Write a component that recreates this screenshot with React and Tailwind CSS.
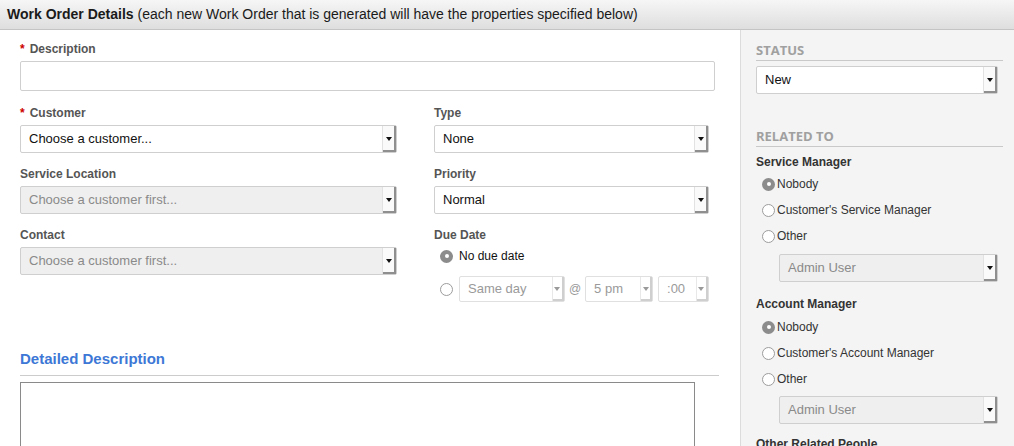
const font = { fontFamily: '"Liberation Sans", Arial, sans-serif' };

const Arrow = () => (
  <div className="flex h-full w-[14px] shrink-0 items-center justify-center border-l border-[#e2e2e2] bg-[#fafafa] shadow-[inset_-2px_-2px_0_#8f8f8f]">
    <svg width="6" height="4" viewBox="0 0 6 4" className="-ml-[2px] -mt-[1px]">
      <path d="M0 0h6L3 4z" fill="#111" />
    </svg>
  </div>
);

const Select = ({ value, disabled, className = '' }) => (
  <div
    className={`flex h-[28px] items-center rounded-[2px] border border-[#cfcfcf] ${
      disabled ? 'bg-[#efefef] text-[#8a8a8a]' : 'bg-white text-[#111]'
    } ${className}`}
  >
    <span className="flex-1 truncate pl-[8px] text-[13px]">{value}</span>
    <Arrow />
  </div>
);

const SmallSelect = ({ value, className = '' }) => (
  <div className={`flex h-[26px] items-center rounded-[2px] border border-[#e0e0e0] bg-white text-[#9a9a9a] ${className}`}>
    <span className="flex-1 truncate pl-[8px] text-[13px]">{value}</span>
    <div className="flex h-full w-[12px] items-center justify-center border-l border-[#e8e8e8] shadow-[inset_-2px_-2px_0_#cfcfcf]">
      <svg width="6" height="4" viewBox="0 0 6 4" className="-ml-[2px]">
        <path d="M0 0h6L3 4z" fill="#9a9a9a" />
      </svg>
    </div>
  </div>
);

const Radio = ({ checked }) =>
  checked ? (
    <span className="flex h-[13px] w-[13px] shrink-0 items-center justify-center rounded-full bg-[#8c8c8c]">
      <span className="h-[4px] w-[4px] rounded-full bg-white" />
    </span>
  ) : (
    <span className="h-[13px] w-[13px] shrink-0 rounded-full border border-[#9c9c9c] bg-white" />
  );

const Label = ({ children, required }) => (
  <div className="mb-[4px] flex h-[16px] items-center text-[12px] font-bold text-[#555]">
    {required && <span className="mr-[5px] text-[#c00]">*</span>}
    {children}
  </div>
);

const SideHeading = ({ children }) => (
  <div
    className="border-b border-[#c9c9c9] pb-[2px] text-[13px] font-bold uppercase leading-[16px] text-[#a0a0a0]"
    style={{ fontFamily: '"Open Sans", sans-serif' }}
  >
    {children}
  </div>
);

const RadioRow = ({ checked, children }) => (
  <div className="flex h-[26px] items-center gap-[2px] pl-[6px] text-[12px] text-[#333]">
    <Radio checked={checked} />
    <span>{children}</span>
  </div>
);

export default function App() {
  return (
    <div className="h-[446px] w-[1014px] overflow-hidden bg-white" style={font}>
      <div className="flex h-[30px] items-center border-b border-[#c4c4c4] bg-gradient-to-b from-[#f6f6f6] to-[#dedede] pl-[7px] text-[14px] text-[#1a1a1a]">
        <span className="font-bold">Work Order Details</span>
        <span className="ml-[4px]">(each new Work Order that is generated will have the properties specified below)</span>
      </div>

      <div className="flex">
        <div className="w-[740px] shrink-0 pl-[20px] pt-[11px]">
          <Label required>Description</Label>
          <div className="h-[30px] w-[695px] rounded-[2px] border border-[#cfcfcf] bg-white" />

          <div className="mt-[14px] flex items-start gap-[37px]">
            <div className="w-[377px]">
              <Label required>Customer</Label>
              <Select value="Choose a customer..." />
              <div className="mt-[13px]">
                <Label>Service Location</Label>
                <Select value="Choose a customer first..." disabled />
              </div>
              <div className="mt-[13px]">
                <Label>Contact</Label>
                <Select value="Choose a customer first..." disabled />
              </div>
            </div>

            <div className="w-[275px]">
              <Label>Type</Label>
              <Select value="None" />
              <div className="mt-[13px]">
                <Label>Priority</Label>
                <Select value="Normal" />
              </div>
              <div className="mt-[13px]">
                <div className="flex h-[16px] items-center text-[12px] font-bold text-[#555]">Due Date</div>
                <div className="mt-[3px] flex h-[20px] items-center gap-[6px] pl-[6px] text-[12px] text-[#111]">
                  <Radio checked />
                  <span>No due date</span>
                </div>
                <div className="mt-[10px] flex items-center pl-[6px]">
                  <Radio />
                  <SmallSelect value="Same day" className="ml-[6px] w-[106px]" />
                  <span className="mx-[4px] text-[12px] text-[#999]">@</span>
                  <SmallSelect value="5 pm" className="w-[68px]" />
                  <SmallSelect value=":00" className="ml-[5px] w-[51px]" />
                </div>
              </div>
            </div>
          </div>

          <div className="mt-[47px] w-[699px] border-b border-[#cccccc] pb-[6px] text-[15px] font-bold leading-[20px] text-[#3d78d6]">
            Detailed Description
          </div>
          <div className="mt-[6px] h-[80px] w-[675px] border border-[#8a8a8a] bg-white" />
        </div>

        <div className="h-[416px] flex-1 border-l border-[#dcdcdc] bg-[#f4f4f4] pl-[15px] pr-[11px] pt-[12px]">
          <SideHeading>Status</SideHeading>
          <Select value="New" className="mt-[5px] w-[242px]" />

          <div className="mt-[34px]">
            <SideHeading>Related To</SideHeading>
          </div>
          <div className="mt-[7px] text-[12px] font-bold leading-[16px] text-[#333]">Service Manager</div>
          <div className="mt-[1px]">
            <RadioRow checked>Nobody</RadioRow>
            <RadioRow>Customer's Service Manager</RadioRow>
            <RadioRow>Other</RadioRow>
          </div>
          <Select value="Admin User" disabled className="ml-[23px] mt-[5px] w-[219px]" />

          <div className="mt-[14px] text-[12px] font-bold leading-[16px] text-[#333]">Account Manager</div>
          <div className="mt-[2px]">
            <RadioRow checked>Nobody</RadioRow>
            <RadioRow>Customer's Account Manager</RadioRow>
            <RadioRow>Other</RadioRow>
          </div>
          <Select value="Admin User" disabled className="ml-[23px] mt-[4px] w-[219px]" />

          <div className="mt-[12px] text-[12px] font-bold leading-[16px] text-[#333]">Other Related People</div>
        </div>
      </div>
    </div>
  );
}
